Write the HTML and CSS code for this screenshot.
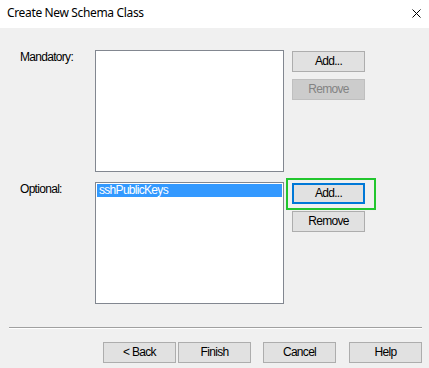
FILE: index.html
```html
<!DOCTYPE html>
<html>
<head>
<meta charset="utf-8">
<link rel="stylesheet" href="styles.css">
</head>
<body>
<div class="dialog">
  <div class="titlebar">
    <span class="title">Create New Schema Class</span>
    <svg class="close" width="9" height="9" viewBox="0 0 9 9"><path d="M0.5 0.5 L8.5 8.5 M8.5 0.5 L0.5 8.5" stroke="#000" stroke-width="1" fill="none"/></svg>
  </div>
  <div class="content">
    <div class="row">
      <div class="label">Mandatory:</div>
      <div class="listbox"></div>
      <div class="btncol">
        <div class="btn">Add...</div>
        <div class="btn disabled">Remove</div>
      </div>
    </div>
    <div class="row">
      <div class="label">Optional:</div>
      <div class="listbox">
        <div class="item selected">sshPublicKeys</div>
      </div>
      <div class="btncol">
        <div class="btn focused">Add...<span class="highlight"></span></div>
        <div class="btn">Remove</div>
      </div>
    </div>
  </div>
  <div class="separator"></div>
  <div class="footer">
    <div class="btn">&lt; Back</div>
    <div class="btn finish">Finish</div>
    <div class="btn cancel">Cancel</div>
    <div class="btn help">Help</div>
  </div>
</div>
</body>
</html>
```
FILE: styles.css
```css
html, body {
  margin: 0;
  padding: 0;
  background: #f0f0f0;
}
.dialog {
  width: 429px;
  height: 368px;
  background: #f0f0f0;
  font-family: "Liberation Sans", Arial, sans-serif;
  font-size: 12px;
  letter-spacing: -0.7px;
  color: #000;
  overflow: hidden;
}
.titlebar {
  height: 28px;
  background: #fff;
  display: flex;
  align-items: center;
  justify-content: space-between;
  padding: 0 8px 3px 7px;
  box-sizing: border-box;
}
.title {
  font-family: "Noto Sans", "Open Sans", sans-serif;
  font-size: 12px;
  letter-spacing: -0.35px;
  color: #000;
}
.close {
  margin-top: 2px;
}
.content {
  padding: 22px 0 0 20px;
  display: flex;
  flex-direction: column;
  gap: 10px;
}
.row {
  display: flex;
  height: 122px;
}
.label {
  width: 75px;
  padding-top: 1px;
  line-height: 13px;
}
.listbox {
  width: 189px;
  height: 122px;
  box-sizing: border-box;
  border: 1px solid #828790;
  background: #fff;
  padding: 1px;
}
.item {
  height: 13px;
  line-height: 13px;
  padding-left: 2px;
}
.item.selected {
  background: #3399ff;
  color: #fff;
}
.btncol {
  margin-left: 8px;
  margin-top: 1px;
  display: flex;
  flex-direction: column;
  gap: 7px;
}
.btn {
  position: relative;
  width: 73px;
  height: 21px;
  box-sizing: border-box;
  border: 1px solid #adadad;
  background: #e1e1e1;
  display: flex;
  align-items: center;
  justify-content: center;
  line-height: 13px;
  white-space: pre;
}
.btn.disabled {
  background: #cccccc;
  border-color: #bfbfbf;
  color: #838383;
}
.btn.focused {
  border: 2px solid #0078d7;
}
.highlight {
  position: absolute;
  left: -8px;
  top: -7px;
  width: 90px;
  height: 32px;
  box-sizing: border-box;
  border: 2px solid #22c62e;
}
.separator {
  margin: 23px 0 0 9px;
  width: 413px;
  height: 1px;
  background: #a0a0a0;
  border-bottom: 1px solid #ffffff;
}
.footer {
  display: flex;
  padding: 13px 0 0 103px;
}
.finish {
  margin-left: 2px;
}
.cancel {
  margin-left: 12px;
}
.help {
  margin-left: 13px;
}
```
